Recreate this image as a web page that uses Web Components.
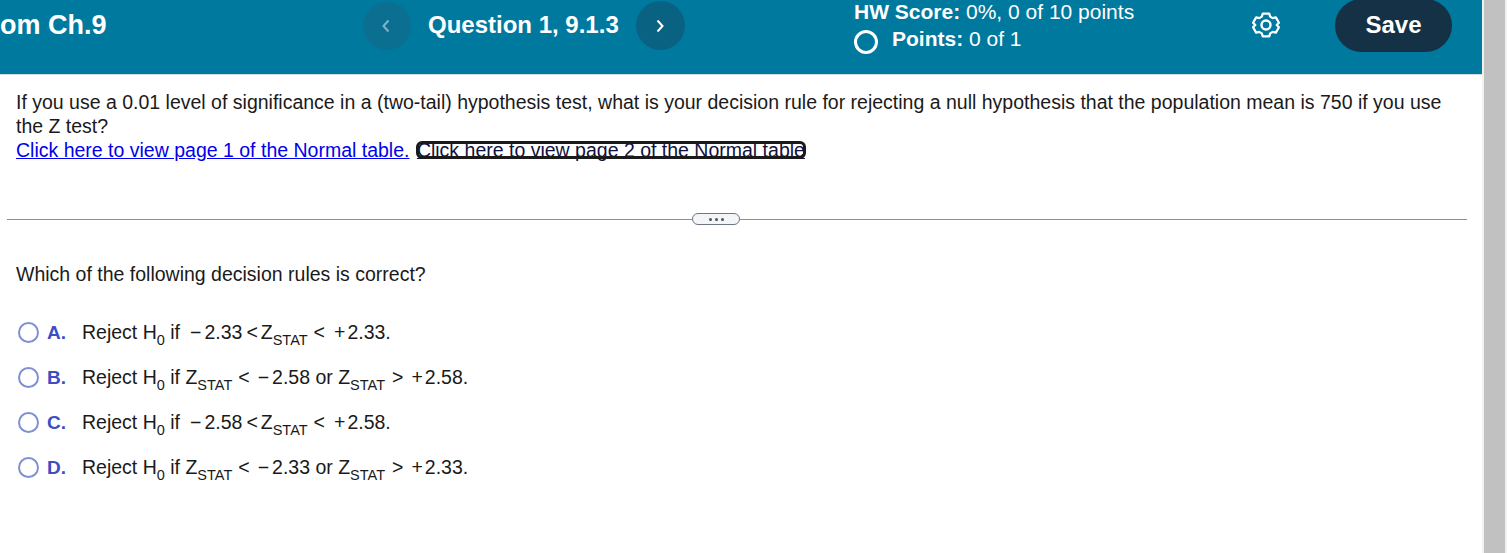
<!DOCTYPE html>
<html><head><meta charset="utf-8"><style>
html,body{margin:0;padding:0;height:553px;overflow:hidden;background:#fff;font-family:"Liberation Sans",Arial,sans-serif}
body{display:flex}
</style></head><body>
<quiz-page></quiz-page><fake-scrollbar></fake-scrollbar>
<script>
function def(name,css,html){customElements.define(name,class extends HTMLElement{constructor(){super();this.attachShadow({mode:'open'}).innerHTML='<style>'+css+'</style>'+html}})}
def('fake-scrollbar',':host{display:block;width:25px;height:553px;background:#f1f1f1;box-sizing:border-box;padding-left:2px}div{width:21px;height:553px;background:#c1c1c1}','<div></div>');
def('quiz-header',`:host{display:flex;box-sizing:border-box;height:75px;background:#00799e;color:#fff;align-items:flex-start;overflow:hidden;border-bottom:1px solid #d3dbe4}
.t{font-weight:700;font-size:24px;line-height:26px}
.title{width:363px;margin-top:12px;flex:none;font-size:27px}
.nav{flex:none;width:48px;height:48px;border-radius:50%;margin-top:2px;display:flex;align-items:center;justify-content:center}
.prev{background:#0b6f91}.next{background:#0a6282;width:49px;height:49px;margin-top:1px}
.next svg{margin-right:2px}.prev svg{margin-right:2px}
.q{flex:none;width:225px;margin-top:12px;padding-left:17px;box-sizing:border-box;white-space:nowrap}
.score{flex:none;width:567px;padding-left:169px;box-sizing:border-box;font-size:21px;line-height:24px;white-space:nowrap}
.score b{font-weight:700}
.r2{display:flex;align-items:center;margin-top:2px}
.ring{box-sizing:border-box;width:24px;height:24px;border:3px solid #fff;border-radius:50%;margin-right:14px;margin-top:4px;flex:none}
.gear{flex:none;margin-top:11px}
.save{flex:none;margin-left:55px;margin-top:-1px;width:117px;height:53px;border-radius:27px;background:#153145;display:flex;align-items:center;justify-content:center;font-weight:700;font-size:24px;padding-bottom:2px;box-sizing:border-box}`,
`<div class="t title">om Ch.9</div>
<div class="nav prev"><svg width="10" height="14" viewBox="0 0 10 14"><path d="M7.500 1.500 2.500 7l5 5.500" fill="none" stroke="#7fb4c8" stroke-width="2"/></svg></div>
<div class="t q">Question 1, 9.1.3</div>
<div class="nav next"><svg width="10" height="14" viewBox="0 0 10 14"><path d="M2.500 1.500 7.500 7l-5 5.500" fill="none" stroke="#fff" stroke-width="2"/></svg></div>
<div class="score"><div><b>HW Score:</b> 0%, 0 of 10 points</div><div class="r2"><span class="ring"></span><span style="margin-top:-3px"><b>Points:</b> 0 of 1</span></div></div>
<svg class="gear" width="28" height="28" viewBox="0 0 28 28" fill="none" stroke="#fff" stroke-width="2.400" stroke-linejoin="round"><path d="M10.500 1.700h7l1 3.300 2.700 1.600 3.400-.8 3.300 5.800-2.400 2.400 2.400 2.400-3.300 5.800-3.400-.8-2.700 1.600-1 3.300h-7l-1-3.300-2.700-1.600-3.400.8-3.300-5.800 2.400-2.400-2.400-2.400 3.300-5.800 3.400.8 2.700-1.600z" transform="translate(14 14) scale(.93) translate(-14 -14)"/><circle cx="14" cy="14" r="4.500"/></svg>
<div class="save">Save</div>`);
def('quiz-divider',`:host{display:flex;align-items:center;margin:0 0 0 7px;width:1460px;height:12px}
i{flex:1;height:1px;background:#8a9099}
i:first-of-type{flex:none;width:685px}
span{flex:none;box-sizing:border-box;width:48px;height:12px;border:1px solid #6d7683;border-radius:6px;background:#f4f5f7;display:flex;align-items:center;justify-content:center;gap:3px}
u{width:3px;height:3px;border-radius:50%;background:#4a5260}`,`<i></i><span><u></u><u></u><u></u></span><i></i>`);
def('quiz-option',`:host{display:flex;align-items:center;height:45px;font-size:19.5px;color:#1a1a1a}
.r{box-sizing:border-box;width:21px;height:21px;border:2.500px solid #7f8fd4;border-radius:50%;margin-left:18px;flex:none;background:#fff}
.l{width:35px;margin-left:8px;font-weight:700;color:#3b4ec2;font-size:19px;flex:none}
.tx{white-space:nowrap;line-height:24px;margin-top:-2px}`,`<span class="r"></span><span class="l"><slot name="l"></slot></span><span class="tx"><slot></slot></span>`);
def('quiz-page',`:host{display:block;width:1482px;height:553px;flex:none;font-size:19.5px;color:#1a1a1a;line-height:24px}
.body{padding:15px 34px 0 16px;height:71px}
p{margin:0}
a{color:#0000ee;text-decoration:underline}
.f{display:inline-block;width:388px;height:16px;line-height:16px;outline:3px solid #1a1a1a;outline-offset:-2px;border-radius:5px;color:#101040;margin-left:2px;padding:0;white-space:nowrap}
quiz-divider{margin-top:52px}
.ask{margin:37px 0 0 16px}
.opts{margin-top:24px;display:block}
sub{font-size:14.500px;line-height:0;vertical-align:-6px}
.g2{margin-left:2px}.g3{margin-left:3px}.g4{margin-left:4px}.g6{margin-left:6px}.g7{margin-left:7px}.g8{margin-left:8px}.g9{margin-left:9px}.g10{margin-left:10px}`,
`<quiz-header></quiz-header>
<div class="body"><p>If you use a 0.01 level of significance in a (two-tail) hypothesis test, what is your decision rule for rejecting a null hypothesis that the population mean is 750 if you use the Z test?</p>
<p style="white-space:nowrap"><a href="#a">Click here to view page 1 of the Normal table.</a> <a class="f" href="#b">Click here to view page 2 of the Normal table</a></p></div>
<quiz-divider></quiz-divider>
<p class="ask">Which of the following decision rules is correct?</p>
<div class="opts">
<quiz-option><span slot="l">A.</span>Reject H<sub>0</sub> if<span class="g10">−</span><span class="g3">2.33</span><span class="g4">&lt;</span><span class="g3">Z</span><sub>STAT</sub><span class="g6">&lt;</span><span class="g9">+</span><span class="g2">2.33.</span></quiz-option>
<quiz-option><span slot="l">B.</span>Reject H<sub>0</sub> if Z<sub>STAT</sub><span class="g6">&lt;</span><span class="g8">−</span><span class="g3">2.58</span> or Z<sub>STAT</sub><span class="g7">&gt;</span><span class="g8">+</span><span class="g2">2.58.</span></quiz-option>
<quiz-option><span slot="l">C.</span>Reject H<sub>0</sub> if<span class="g10">−</span><span class="g3">2.58</span><span class="g4">&lt;</span><span class="g3">Z</span><sub>STAT</sub><span class="g6">&lt;</span><span class="g9">+</span><span class="g2">2.58.</span></quiz-option>
<quiz-option><span slot="l">D.</span>Reject H<sub>0</sub> if Z<sub>STAT</sub><span class="g6">&lt;</span><span class="g8">−</span><span class="g3">2.33</span> or Z<sub>STAT</sub><span class="g7">&gt;</span><span class="g8">+</span><span class="g2">2.33.</span></quiz-option>
</div>`);
</script></body></html>
